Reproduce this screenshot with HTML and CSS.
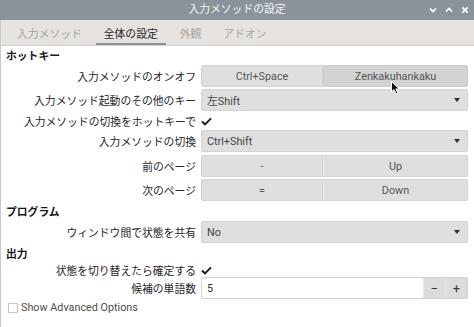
FILE: index.html
```html
<!DOCTYPE html>
<html lang="ja">
<head>
<meta charset="utf-8">
<title>入力メソッドの設定</title>
<link rel="stylesheet" href="styles.css">
</head>
<body>
<div class="window">
  <div class="titlebar">
    <span class="title">入力メソッドの設定</span>
    <div class="wm-buttons">
      <svg class="wm" viewBox="0 0 8 8"><path d="M1 2.5 L4 5.5 L7 2.5" /></svg>
      <svg class="wm" viewBox="0 0 8 8"><path d="M1 5.5 L4 2.5 L7 5.5" /></svg>
      <svg class="wm" viewBox="0 0 8 8"><path d="M1.3 1.3 L6.7 6.7 M6.7 1.3 L1.3 6.7" /></svg>
    </div>
  </div>
  <div class="frame">
    <div class="tabs">
      <span class="tab">入力メソッド</span>
      <span class="tab active">全体の設定</span>
      <span class="tab">外観</span>
      <span class="tab">アドオン</span>
    </div>
    <div class="content">
      <div class="section">ホットキー</div>
      <div class="row">
        <span class="label">入力メソッドのオンオフ</span>
        <div class="pair">
          <span class="btn">Ctrl+Space</span>
          <span class="btn hover">Zenkakuhankaku</span>
        </div>
      </div>
      <div class="row">
        <span class="label">入力メソッド起動のその他のキー</span>
        <div class="combo"><span>左Shift</span><span class="arrow"></span></div>
      </div>
      <div class="row check-row">
        <span class="label">入力メソッドの切換をホットキーで</span>
        <svg class="check" viewBox="0 0 11 9"><path d="M1 4.6 L4 7.4 L10 1.4" /></svg>
      </div>
      <div class="row">
        <span class="label">入力メソッドの切換</span>
        <div class="combo"><span>Ctrl+Shift</span><span class="arrow"></span></div>
      </div>
      <div class="row row-pages">
        <span class="label">前のページ</span>
        <div class="pair">
          <span class="btn">-</span>
          <span class="btn">Up</span>
        </div>
      </div>
      <div class="row">
        <span class="label">次のページ</span>
        <div class="pair">
          <span class="btn">=</span>
          <span class="btn">Down</span>
        </div>
      </div>
      <div class="section">プログラム</div>
      <div class="row">
        <span class="label">ウィンドウ間で状態を共有</span>
        <div class="combo"><span>No</span><span class="arrow"></span></div>
      </div>
      <div class="section section-out">出力</div>
      <div class="row check-row small">
        <span class="label">状態を切り替えたら確定する</span>
        <svg class="check" viewBox="0 0 11 9"><path d="M1 4.6 L4 7.4 L10 1.4" /></svg>
      </div>
      <div class="row">
        <span class="label">候補の単語数</span>
        <div class="spin">
          <span class="spin-value">5</span>
          <span class="spin-btn">−</span>
          <span class="spin-btn">+</span>
        </div>
      </div>
      <div class="advanced">
        <span class="box"></span>
        <span>Show Advanced Options</span>
      </div>
    </div>
  </div>
  <svg class="cursor" viewBox="0 0 10 14"><path d="M0.5 0.5 L0.5 11 L3 8.6 L5 12.8 L6.8 12 L4.9 7.9 L8.3 7.9 Z" /></svg>
</div>
</body>
</html>
```
FILE: styles.css
```css
html, body {
  margin: 0;
  padding: 0;
}

body {
  width: 474px;
  height: 327px;
  overflow: hidden;
  background: #ffffff;
  font-family: Roboto, "Noto Sans CJK JP", sans-serif;
  font-size: 10.8px;
  color: #2a2a2a;
}

.window {
  position: relative;
  height: 327px;
}

.titlebar {
  height: 20px;
  background: #8a939c;
  display: grid;
  grid-template-columns: 1fr auto 1fr;
  align-items: center;
  color: #f6f6f6;
}

.title {
  grid-column: 2;
  font-size: 10.8px;
  line-height: 20px;
}

.wm-buttons {
  grid-column: 3;
  justify-self: end;
  display: flex;
  align-items: center;
  gap: 8px;
  padding-right: 5px;
}

.wm {
  width: 8px;
  height: 8px;
  fill: none;
  stroke: #ffffff;
  stroke-width: 1.7;
}

.frame {
  border-left: 1px solid #c9c9c9;
  height: 307px;
}

.tabs {
  height: 25px;
  background: #e5e2df;
  border-bottom: 1px solid #d4d0cb;
  display: flex;
  padding-left: 8px;
  gap: 6px;
}

.tab {
  display: flex;
  align-items: center;
  padding: 0 8px;
  color: #a8a4a0;
}

.tab.active {
  color: #262626;
  box-shadow: inset 0 -2px #8b9299;
}

.content {
  padding: 1px 6px 0 5px;
  display: flex;
  flex-direction: column;
  gap: 2px;
}

.section {
  height: 16px;
  display: flex;
  align-items: center;
  font-weight: bold;
  color: #1a1a1a;
}

.section-out {
  height: 15px;
}

.row {
  display: grid;
  grid-template-columns: 190px 1fr;
  column-gap: 5px;
  height: 22px;
  align-items: center;
}

.row-pages {
  margin-top: 1px;
}

.check-row {
  height: 15px;
}

.check-row.small {
  height: 13px;
}

.label {
  text-align: right;
  white-space: nowrap;
  color: #262626;
}

.pair {
  display: grid;
  grid-template-columns: 122px 1fr;
  height: 22px;
}

.btn {
  box-sizing: border-box;
  height: 22px;
  display: flex;
  align-items: center;
  justify-content: center;
  background: #dfdfdf;
  border: 1px solid #d3d3d3;
  color: #555555;
}

.btn:first-child {
  border-radius: 2px 0 0 2px;
}

.btn:last-child {
  border-radius: 0 2px 2px 0;
  border-left-color: #e9e9e9;
}

.btn.hover {
  background: #d3d3d3;
  border-color: #cbcbcb;
}

.combo {
  box-sizing: border-box;
  height: 22px;
  display: flex;
  align-items: center;
  justify-content: space-between;
  padding: 0 7px 0 5px;
  background: #dfdfdf;
  border: 1px solid #d3d3d3;
  border-radius: 2px;
  color: #444444;
}

.arrow {
  width: 0;
  height: 0;
  border-left: 3.5px solid transparent;
  border-right: 3.5px solid transparent;
  border-top: 4px solid #2f2f2f;
}

.check {
  width: 11px;
  height: 9px;
  fill: none;
  stroke: #1c1c1c;
  stroke-width: 2;
}

.spin {
  box-sizing: border-box;
  height: 22px;
  display: flex;
  align-items: stretch;
  background: #ffffff;
  border: 1px solid #d0d0d0;
  border-radius: 2px;
  overflow: hidden;
}

.spin-value {
  flex: 1;
  display: flex;
  align-items: center;
  padding-left: 5px;
  color: #333333;
}

.spin-btn {
  width: 21px;
  display: flex;
  align-items: center;
  justify-content: center;
  background: #dcdcdc;
  border-left: 1px solid #e8e8e8;
  color: #3a3a3a;
  font-size: 13px;
}

.advanced {
  height: 13px;
  display: flex;
  align-items: center;
  gap: 3px;
  padding-left: 2px;
  color: #4d4d4d;
}

.box {
  box-sizing: border-box;
  width: 10px;
  height: 10px;
  border: 1px solid #c2c2c2;
  border-radius: 1px;
  background: #ffffff;
}

.cursor {
  position: absolute;
  left: 391px;
  top: 81px;
  width: 10px;
  height: 14px;
  fill: #111111;
  stroke: #ffffff;
  stroke-width: 1;
}
```
